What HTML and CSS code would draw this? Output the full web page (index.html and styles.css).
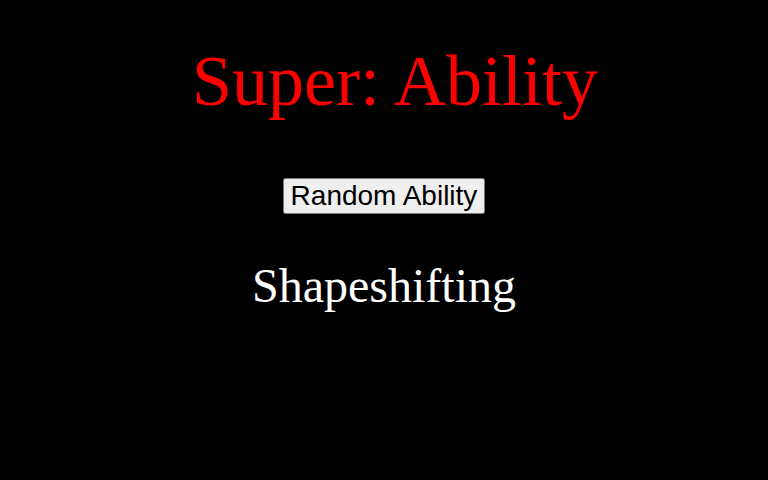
FILE: index.html
```html
<!DOCTYPE html>
<html lang="en">
<head>
  <meta charset="UTF-8">
  <title>Super: Ability</title>
  <link rel="stylesheet" href="styles.css">
</head>
<body>
  <h1 class="title">Super: Ability</h1>
  <div class="controls">
    <button id="roll">Random Ability</button>
  </div>
  <p id="ability" class="ability">Shapeshifting</p>
</body>
</html>
```

FILE: styles.css
```css
body {
  margin: 0;
  padding: 8px;
  background-color: #000;
  font-family: 'Liberation Serif', 'Times New Roman', serif;
  text-align: center;
}

.title {
  color: #ff0000;
  font-size: 72px;
  font-weight: normal;
  margin: 32px 0 55px;
  padding-left: 22px;
}

.controls button {
  font-family: 'Liberation Sans', Arial, sans-serif;
  font-size: 28px;
  padding: 0 6px;
}

.ability {
  color: #fff;
  font-size: 48px;
  margin: 44px 0;
}
```
